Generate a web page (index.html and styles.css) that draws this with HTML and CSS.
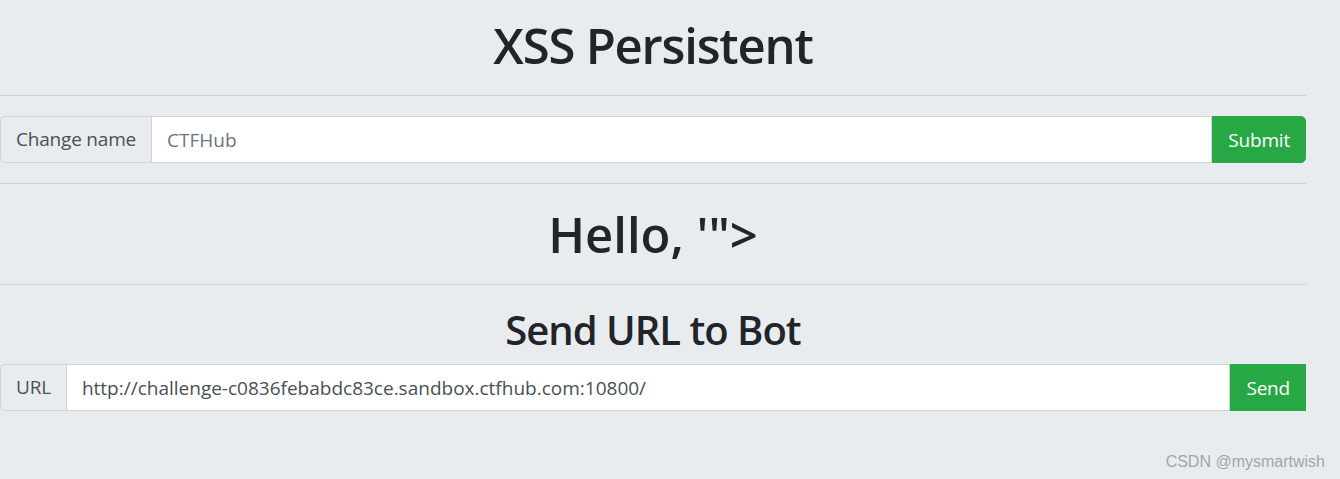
FILE: index.html
```html
<!DOCTYPE html>
<html lang="en">
<head>
<meta charset="utf-8">
<title>XSS Persistent</title>
<link rel="stylesheet" href="styles.css">
</head>
<body>
<div class="page">
  <h1 class="title title-main">XSS Persistent</h1>
  <hr class="rule">
  <form class="group">
    <span class="addon">Change name</span>
    <input class="field" type="text" placeholder="CTFHub">
    <button class="btn btn-round" type="button">Submit</button>
  </form>
  <hr class="rule">
  <h1 class="title">Hello, '"&gt;</h1>
  <hr class="rule">
  <h2 class="subtitle">Send URL to Bot</h2>
  <form class="group">
    <span class="addon">URL</span>
    <input class="field field-filled" type="text" value="http://challenge-c0836febabdc83ce.sandbox.ctfhub.com:10800/">
    <button class="btn" type="button">Send</button>
  </form>
</div>
<div class="watermark">CSDN @mysmartwish</div>
</body>
</html>
```
FILE: styles.css
```css
html, body {
  margin: 0;
  padding: 0;
  background: #e9ecef;
}
body {
  font-family: "Open Sans", "Noto Sans", sans-serif;
  color: #212529;
  font-size: 19px;
  line-height: 1.5;
  height: 479px;
  overflow: hidden;
  position: relative;
}
.page {
  width: 1306px;
  padding-top: 15px;
}
.title {
  margin: 0 0 10px;
  font-size: 49px;
  font-weight: 600;
  line-height: 60px;
  text-align: center;
}
.title-main {
  letter-spacing: -1.2px;
}
.subtitle {
  margin: 0 0 10px;
  padding-top: 1px;
  font-size: 40px;
  font-weight: 600;
  line-height: 48px;
  letter-spacing: -1px;
  text-align: center;
}
.rule {
  margin: 20px 0;
  border: 0;
  border-top: 1px solid rgba(0, 0, 0, 0.1);
  height: 0;
}
.group {
  display: flex;
  align-items: stretch;
  height: 47px;
  margin: 0;
}
.addon {
  display: flex;
  align-items: center;
  padding: 0 15px;
  background: #e9ecef;
  border: 1px solid #ced4da;
  border-radius: 5px 0 0 5px;
  color: #495057;
  font-size: 19px;
  letter-spacing: -0.2px;
  white-space: nowrap;
}
.field {
  flex: 1;
  min-width: 0;
  margin: 0;
  padding: 0 15px;
  border: 1px solid #ced4da;
  border-left: 0;
  background: #fff;
  color: #495057;
  font-family: inherit;
  font-size: 19px;
  letter-spacing: 0;
  outline: none;
}
.field::placeholder {
  color: #6c757d;
  opacity: 1;
}
.btn {
  margin: 0;
  padding: 0 15px;
  border: 1px solid #28a745;
  background: #28a745;
  color: #fff;
  font-family: inherit;
  font-size: 19px;
  letter-spacing: -0.2px;
}
.btn-round {
  border-radius: 0 5px 5px 0;
}
.watermark {
  position: absolute;
  right: 15px;
  top: 450px;
  font-family: "Liberation Sans", Arial, sans-serif;
  font-size: 16px;
  color: #a3a5a8;
}
```
